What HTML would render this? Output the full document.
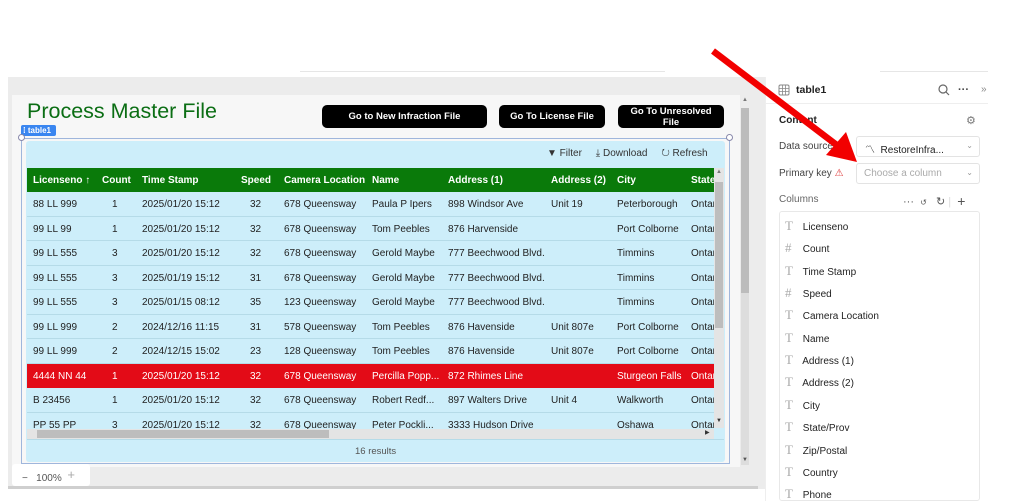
<!DOCTYPE html>
<html><head><meta charset="utf-8"><style>
*{margin:0;padding:0;box-sizing:border-box}
body{width:1024px;height:501px;background:#fff;position:relative;overflow:hidden;font-family:"Liberation Sans",sans-serif;color:#222}
.a{position:absolute;white-space:nowrap}
.btn{position:absolute;background:#000;color:#fff;border-radius:5px;font-weight:bold;font-size:9.5px;display:flex;align-items:center;justify-content:center;text-align:center;line-height:11px}
.row{position:absolute;left:27px;width:687px;height:24.5px;border-bottom:1px solid #b5dbe8;font-size:10px;background:#cdeefa}
.row span{position:absolute;top:7px;white-space:nowrap}
.hd{font-weight:bold;color:#fff}
.col{position:absolute;left:785px;font-size:10px;color:#222}
.col i{font-style:normal;color:#aaa;font-size:13px;display:inline-block;width:15px;font-family:"Liberation Serif",serif}
</style></head><body>
<div class="a" style="left:300px;top:71px;width:365px;height:1px;background:#e6e6e6"></div>
<div class="a" style="left:880px;top:71px;width:108px;height:1px;background:#e6e6e6"></div>
<div class="a" style="left:8px;top:77px;width:757px;height:412px;background:#ececec"></div>
<div class="a" style="left:12px;top:95px;width:728px;height:372px;background:#f7f7f7"></div>
<div class="a" style="left:8px;top:486px;width:750px;height:3px;background:#cfcfcf"></div>
<div class="a" style="left:741px;top:108px;width:8px;height:357px;background:#ddd"></div>
<div class="a" style="left:741px;top:108px;width:8px;height:185px;background:#bcbcbc"></div>
<div class="a" style="left:742px;top:97px;font-size:6px;color:#777">▲</div>
<div class="a" style="left:742px;top:457px;font-size:6px;color:#555">▼</div>
<div class="a" style="left:27px;top:99px;font-size:21.5px;color:#0b6e14">Process Master File</div>
<div class="btn" style="left:322px;top:105px;width:165px;height:23px">Go to New Infraction File</div>
<div class="btn" style="left:499px;top:105px;width:106px;height:23px">Go To License File</div>
<div class="btn" style="left:618px;top:105px;width:106px;height:23px">Go To Unresolved<br>File</div>
<div class="a" style="left:21px;top:125px;width:35px;height:11px;background:#3a86f0;border-radius:2px;color:#fff;font-size:8px;font-weight:bold;line-height:11px;padding-left:2px">⁞ table1</div>
<div class="a" style="left:21px;top:138px;width:709px;height:326px;border:1px solid #9fb6dc"></div>
<div class="a" style="left:18px;top:134px;width:7px;height:7px;border:1px solid #88a;border-radius:50%;background:#fff"></div>
<div class="a" style="left:726px;top:134px;width:7px;height:7px;border:1px solid #88a;border-radius:50%;background:#fff"></div>
<div class="a" style="left:26px;top:141px;width:699px;height:321px;background:#cdeefa;border-radius:3px"></div>
<div class="a" style="left:547px;top:148px;font-size:10px;color:#333">▼ Filter &nbsp;&nbsp;&nbsp; ⤓ Download &nbsp;&nbsp;&nbsp; ↻ Refresh</div>
<div class="row hd" style="top:168px;background:#0a7a0a;border:none"><span style="left:6px">Licenseno ↑</span><span style="left:75px">Count</span><span style="left:115px">Time Stamp</span><span style="left:214px">Speed</span><span style="left:257px">Camera Location</span><span style="left:345px">Name</span><span style="left:421px">Address (1)</span><span style="left:524px">Address (2)</span><span style="left:590px">City</span><span style="left:664px">State</span></div>
<div class="row" style="top:192px"><span style="left:6px">88 LL 999</span><span style="left:85px">1</span><span style="left:115px">2025/01/20 15:12</span><span style="left:223px">32</span><span style="left:257px">678 Queensway</span><span style="left:345px">Paula P Ipers</span><span style="left:421px">898 Windsor Ave</span><span style="left:524px">Unit 19</span><span style="left:590px">Peterborough</span><span style="left:664px">Ontar</span></div>
<div class="row" style="top:216.5px"><span style="left:6px">99 LL 99</span><span style="left:85px">1</span><span style="left:115px">2025/01/20 15:12</span><span style="left:223px">32</span><span style="left:257px">678 Queensway</span><span style="left:345px">Tom Peebles</span><span style="left:421px">876 Harvenside</span><span style="left:590px">Port Colborne</span><span style="left:664px">Ontar</span></div>
<div class="row" style="top:241px"><span style="left:6px">99 LL 555</span><span style="left:85px">3</span><span style="left:115px">2025/01/20 15:12</span><span style="left:223px">32</span><span style="left:257px">678 Queensway</span><span style="left:345px">Gerold Maybe</span><span style="left:421px">777 Beechwood Blvd.</span><span style="left:590px">Timmins</span><span style="left:664px">Ontar</span></div>
<div class="row" style="top:265.5px"><span style="left:6px">99 LL 555</span><span style="left:85px">3</span><span style="left:115px">2025/01/19 15:12</span><span style="left:223px">31</span><span style="left:257px">678 Queensway</span><span style="left:345px">Gerold Maybe</span><span style="left:421px">777 Beechwood Blvd.</span><span style="left:590px">Timmins</span><span style="left:664px">Ontar</span></div>
<div class="row" style="top:290px"><span style="left:6px">99 LL 555</span><span style="left:85px">3</span><span style="left:115px">2025/01/15 08:12</span><span style="left:223px">35</span><span style="left:257px">123 Queensway</span><span style="left:345px">Gerold Maybe</span><span style="left:421px">777 Beechwood Blvd.</span><span style="left:590px">Timmins</span><span style="left:664px">Ontar</span></div>
<div class="row" style="top:314.5px"><span style="left:6px">99 LL 999</span><span style="left:85px">2</span><span style="left:115px">2024/12/16 11:15</span><span style="left:223px">31</span><span style="left:257px">578 Queensway</span><span style="left:345px">Tom Peebles</span><span style="left:421px">876 Havenside</span><span style="left:524px">Unit 807e</span><span style="left:590px">Port Colborne</span><span style="left:664px">Ontar</span></div>
<div class="row" style="top:339px"><span style="left:6px">99 LL 999</span><span style="left:85px">2</span><span style="left:115px">2024/12/15 15:02</span><span style="left:223px">23</span><span style="left:257px">128 Queensway</span><span style="left:345px">Tom Peebles</span><span style="left:421px">876 Havenside</span><span style="left:524px">Unit 807e</span><span style="left:590px">Port Colborne</span><span style="left:664px">Ontar</span></div>
<div class="row" style="top:363.5px;background:#e30b17;color:#fff;border-color:#e30b17"><span style="left:6px">4444 NN 44</span><span style="left:85px">1</span><span style="left:115px">2025/01/20 15:12</span><span style="left:223px">32</span><span style="left:257px">678 Queensway</span><span style="left:345px">Percilla Popp...</span><span style="left:421px">872 Rhimes Line</span><span style="left:590px">Sturgeon Falls</span><span style="left:664px">Ontar</span></div>
<div class="row" style="top:388px"><span style="left:6px">B 23456</span><span style="left:85px">1</span><span style="left:115px">2025/01/20 15:12</span><span style="left:223px">32</span><span style="left:257px">678 Queensway</span><span style="left:345px">Robert Redf...</span><span style="left:421px">897 Walters Drive</span><span style="left:524px">Unit 4</span><span style="left:590px">Walkworth</span><span style="left:664px">Ontar</span></div>
<div class="row" style="top:412.5px;height:16px;border:none;overflow:hidden"><span style="left:6px;top:7px">PP 55 PP</span><span style="left:85px">3</span><span style="left:115px">2025/01/20 15:12</span><span style="left:223px">32</span><span style="left:257px">678 Queensway</span><span style="left:345px">Peter Pockli...</span><span style="left:421px">3333 Hudson Drive</span><span style="left:590px">Oshawa</span><span style="left:664px">Ontar</span></div>
<div class="a" style="left:714px;top:168px;width:10px;height:260px;background:#e4e4e4"></div>
<div class="a" style="left:715px;top:182px;width:8px;height:146px;background:#bdbdbd"></div>
<div class="a" style="left:716px;top:169px;font-size:6px;color:#777">▲</div>
<div class="a" style="left:716px;top:418px;font-size:6px;color:#333">▼</div>
<div class="a" style="left:27px;top:429px;width:687px;height:10px;background:#e4e4e4"></div>
<div class="a" style="left:37px;top:430px;width:292px;height:8px;background:#bdbdbd"></div>
<div class="a" style="left:705px;top:429px;font-size:6px;color:#333">▶</div>
<div class="a" style="left:27px;top:439px;width:697px;height:1px;background:#b5dbe8"></div>
<div class="a" style="left:355px;top:446px;font-size:9.5px;color:#555">16 results</div>
<div class="a" style="left:12px;top:464px;width:78px;height:22px;background:#fff;border-radius:3px;font-size:10px;color:#555;padding:5px 0 0 10px">−&nbsp;&nbsp; 100% &nbsp;<span style="color:#aaa;font-size:13px;position:relative;top:-2px">+</span></div>
<div class="a" style="left:765px;top:77px;width:223px;height:424px;background:#fff;border-left:1px solid #eee"></div>
<svg class="a" style="left:778px;top:84px" width="12" height="12" viewBox="0 0 12 12"><rect x="1" y="1" width="10" height="10" rx="1.5" fill="none" stroke="#888"/><path d="M1 4.5H11M1 7.5H11M4.5 1V11M7.5 1V11" stroke="#888" stroke-width=".8"/></svg>
<div class="a" style="left:796px;top:84px;font-size:10.5px;font-weight:bold;color:#222">table1</div>
<svg class="a" style="left:938px;top:84px" width="12" height="12"><circle cx="5" cy="5" r="4" fill="none" stroke="#666" stroke-width="1.2"/><path d="M8 8L11 11" stroke="#666" stroke-width="1.2"/></svg>
<div class="a" style="left:958px;top:84px;font-size:11px;color:#444;font-weight:bold">···</div>
<div class="a" style="left:981px;top:84px;font-size:10px;color:#888">»</div>
<div class="a" style="left:766px;top:103px;width:222px;height:1px;background:#eee"></div>
<div class="a" style="left:779px;top:115px;font-size:10px;font-weight:bold">Content</div>
<div class="a" style="left:966px;top:114px;font-size:11px;color:#777">⚙</div>
<div class="a" style="left:779px;top:141px;font-size:10px;color:#444">Data source</div>
<div class="a" style="left:856px;top:136px;width:124px;height:21px;border:1px solid #e3e3e3;border-radius:3px;font-size:10px;padding:4px 0 0 8px">〽&nbsp; RestoreInfra...<span style="position:absolute;right:6px;top:4px;color:#999;font-size:8px">⌄</span></div>
<div class="a" style="left:779px;top:168px;font-size:10px;color:#444">Primary key <span style="color:#d33">⚠</span></div>
<div class="a" style="left:856px;top:163px;width:124px;height:21px;border:1px solid #e3e3e3;border-radius:3px;font-size:10px;color:#aaa;padding:4px 0 0 7px">Choose a column<span style="position:absolute;right:6px;top:4px;color:#999;font-size:8px">⌄</span></div>
<div class="a" style="left:779px;top:194px;font-size:10px;color:#666">Columns</div>
<div class="a" style="left:903px;top:192px;font-size:11px;color:#555">··· &nbsp;<span style="font-size:8px">↺</span>&nbsp;&nbsp; ↻ <span style="color:#ddd">|</span>&nbsp; <span style="font-size:14px;position:relative;top:1px">+</span></div>
<div class="a" style="left:779px;top:211px;width:201px;height:290px;border:1px solid #e8e8e8;border-radius:3px"></div>
<div class="col" style="top:218px"><i>T</i> Licenseno</div>
<div class="col" style="top:240px"><i>#</i> Count</div>
<div class="col" style="top:263px"><i>T</i> Time Stamp</div>
<div class="col" style="top:285px"><i>#</i> Speed</div>
<div class="col" style="top:307px"><i>T</i> Camera Location</div>
<div class="col" style="top:330px"><i>T</i> Name</div>
<div class="col" style="top:352px"><i>T</i> Address (1)</div>
<div class="col" style="top:374px"><i>T</i> Address (2)</div>
<div class="col" style="top:397px"><i>T</i> City</div>
<div class="col" style="top:419px"><i>T</i> State/Prov</div>
<div class="col" style="top:442px"><i>T</i> Zip/Postal</div>
<div class="col" style="top:464px"><i>T</i> Country</div>
<div class="col" style="top:486px"><i>T</i> Phone</div>
<svg class="a" style="left:0;top:0" width="1024" height="501"><path d="M713 51L838 146" stroke="#f20000" stroke-width="6.5"/><path d="M857 162L826 155L846 132Z" fill="#f20000"/></svg>
</body></html>
